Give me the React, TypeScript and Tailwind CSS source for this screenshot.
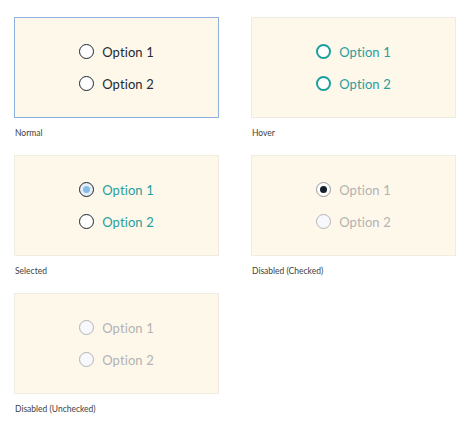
import React from "react";

type Variant = "normal" | "hover" | "selected" | "disabledChecked" | "disabledUnchecked";

const STATES: { label: string; variant: Variant; focused?: boolean }[] = [
  { label: "Normal", variant: "normal", focused: true },
  { label: "Hover", variant: "hover" },
  { label: "Selected", variant: "selected" },
  { label: "Disabled (Checked)", variant: "disabledChecked" },
  { label: "Disabled (Unchecked)", variant: "disabledUnchecked" },
];

function Radio({ variant, checked }: { variant: Variant; checked: boolean }) {
  if (variant === "hover") {
    return <span className="w-[15px] h-[15px] rounded-full border-2 border-[#1a9e9c] bg-white" />;
  }
  if (variant === "disabledChecked" && checked) {
    return (
      <span className="w-[15px] h-[15px] rounded-full border-[1.5px] border-[#9a9a9a] bg-white flex items-center justify-center">
        <span className="w-[7px] h-[7px] rounded-full bg-[#15202e]" />
      </span>
    );
  }
  if (variant === "disabledChecked" || variant === "disabledUnchecked") {
    return <span className="w-[15px] h-[15px] rounded-full border-[1.5px] border-[#b4b4b4] bg-[#f7f8fc]" />;
  }
  if (variant === "selected" && checked) {
    return (
      <span className="w-[15px] h-[15px] rounded-full border-[1.5px] border-[#1b2430] bg-[#e6eef6] flex items-center justify-center">
        <span className="w-[7px] h-[7px] rounded-full bg-[#86bde6]" />
      </span>
    );
  }
  return <span className="w-[15px] h-[15px] rounded-full border-[1.5px] border-[#1b2430] bg-white" />;
}

function textColor(v: Variant) {
  if (v === "hover" || v === "selected") return "text-[#2a9d9c]";
  if (v === "normal") return "text-[#252b33]";
  return "text-[#b3b3b3]";
}

function RadioGroup({ variant }: { variant: Variant }) {
  return (
    <div className="flex flex-col gap-[14px]">
      {["Option 1", "Option 2"].map((opt, i) => (
        <div key={opt} className="flex items-center gap-[8px]">
          <Radio variant={variant} checked={i === 0} />
          <span className={`text-[13px] leading-[18px] tracking-[0.1px] ${textColor(variant)}`}>{opt}</span>
        </div>
      ))}
    </div>
  );
}

export default function App() {
  return (
    <div className="w-[474px] h-[440px] bg-white pl-[14px] pt-[17px]" style={{ fontFamily: "Lato, 'Noto Sans', sans-serif" }}>
      <div className="grid grid-cols-[205px_205px] gap-x-[32px] gap-y-[16px]">
        {STATES.map((s) => (
          <div key={s.label}>
            <div
              className={`h-[101px] bg-[#fdf8ea] border flex items-center justify-center ${
                s.focused ? "border-[#8fb1df]" : "border-[#f1ece0]"
              }`}
            >
              <RadioGroup variant={s.variant} />
            </div>
            <p className="mt-[9px] pl-px text-[8.5px] leading-[12px] text-[#3e3e3e]">{s.label}</p>
          </div>
        ))}
      </div>
    </div>
  );
}
